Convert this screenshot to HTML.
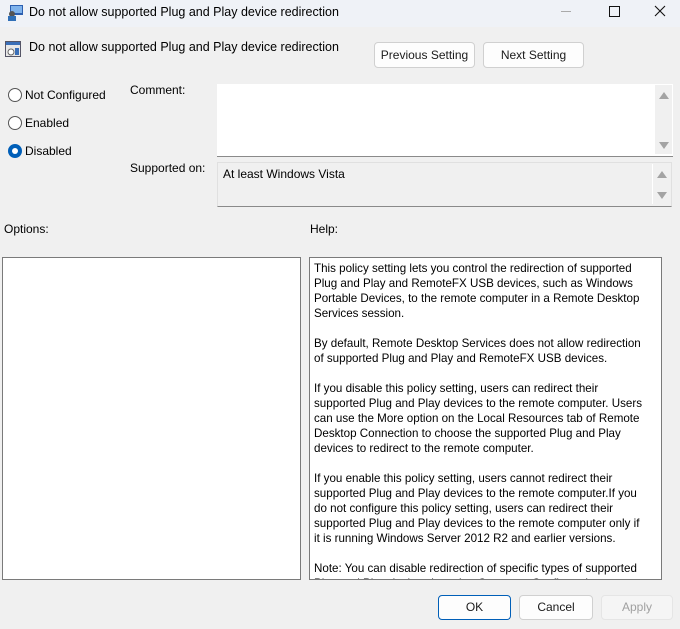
<!DOCTYPE html>
<html><head><style>
body{margin:0;width:680px;height:629px;background:#f0f0f0;font-family:"Liberation Sans",sans-serif;font-size:12px;color:#000;position:relative;overflow:hidden}
.a{position:absolute}
.title{left:0;top:0;width:680px;height:27px;background:#eff2f7}
.btn{position:absolute;background:#fdfdfd;border:1px solid #d0d0d0;border-radius:4px;box-sizing:border-box;text-align:center;font-size:12px;color:#1a1a1a}
.radio{position:absolute;width:12px;height:12px;border:1px solid #555;border-radius:50%;background:#fff}
.box{position:absolute;background:#fff;border:1px solid #7a7a7a;box-sizing:border-box}
.sb{position:absolute;right:1px;top:1px;bottom:2px;width:17px;background:#f0f0f0}
.up,.dn{position:absolute;left:4px;width:0;height:0;border-left:5px solid transparent;border-right:5px solid transparent}
.up{top:7px;border-bottom:7px solid #a3a3a3}.dn{bottom:5px;border-top:7px solid #a3a3a3}
</style></head><body>
<div class="a title"></div>
<svg class="a" style="left:6px;top:4px" width="18" height="18"><rect x="4" y="1" width="13" height="10" fill="#2c5fb0"/><rect x="5" y="2" width="11" height="7" fill="#7fb3ec"/><circle cx="6" cy="10" r="3" fill="#555"/><rect x="2" y="12" width="8" height="5" fill="#2f6fb7"/></svg>
<div class="a" style="left:29px;top:5px;font-size:12.5px">Do not allow supported Plug and Play device redirection</div>
<div class="a" style="left:561px;top:11px;width:10px;height:1px;background:#aaa"></div>
<div class="a" style="left:609px;top:6px;width:9px;height:9px;border:1px solid #111"></div>
<svg class="a" style="left:654px;top:5px" width="12" height="12"><path d="M1 1L11 11M11 1L1 11" stroke="#111" stroke-width="1.1"/></svg>
<svg class="a" style="left:5px;top:41px" width="16" height="16"><rect x="0.5" y="0.5" width="15" height="15" fill="#e8e8e8" stroke="#556"/><rect x="1" y="1" width="14" height="3" fill="#3a6fb8"/><circle cx="6" cy="11" r="3" fill="#fff" stroke="#666"/><rect x="10" y="7" width="4" height="7" fill="#3a6fb8"/></svg>
<div class="a" style="left:29px;top:40px;font-size:12.5px">Do not allow supported Plug and Play device redirection</div>
<div class="btn" style="left:374px;top:42px;width:101px;height:26px;line-height:24px">Previous Setting</div>
<div class="btn" style="left:483px;top:42px;width:101px;height:26px;line-height:24px">Next Setting</div>
<div class="radio" style="left:8px;top:88px"></div><div class="a" style="left:25px;top:88px">Not Configured</div>
<div class="radio" style="left:8px;top:116px"></div><div class="a" style="left:25px;top:116px">Enabled</div>
<div class="radio" style="left:8px;top:144px;border-color:#005fb8;background:#005fb8"></div><div class="a" style="left:12px;top:148px;width:6px;height:6px;border-radius:50%;background:#fff"></div><div class="a" style="left:25px;top:144px">Disabled</div>
<div class="a" style="left:130px;top:83px">Comment:</div>
<div class="a" style="left:130px;top:161px">Supported on:</div>
<div class="a" style="left:217px;top:84px;width:456px;height:72px;background:#fff;border-bottom:1px solid #8a8a8a"><div class="sb"><div class="up"></div><div class="dn"></div></div></div>
<div class="a" style="left:217px;top:162px;width:455px;height:45px;background:#f0f0f0;border:1px solid #e0e0e0;border-bottom:1px solid #8a8a8a;box-sizing:border-box"><div class="sb" style="background:#f0f0f0;border-left:1px solid #fff"><div class="up"></div><div class="dn"></div></div><div class="a" style="left:5px;top:4px">At least Windows Vista</div></div>
<div class="a" style="left:4px;top:222px">Options:</div>
<div class="a" style="left:310px;top:222px">Help:</div>
<div class="box" style="left:2px;top:257px;width:299px;height:323px"></div>
<div class="box" style="left:309px;top:257px;width:353px;height:323px;overflow:hidden"><div style="position:absolute;left:4px;top:3px;font-size:11.6px;line-height:15px;white-space:nowrap">This policy setting lets you control the redirection of supported<br>Plug and Play and RemoteFX USB devices, such as Windows<br>Portable Devices, to the remote computer in a Remote Desktop<br>Services session.<br><br>By default, Remote Desktop Services does not allow redirection<br>of supported Plug and Play and RemoteFX USB devices.<br><br>If you disable this policy setting, users can redirect their<br>supported Plug and Play devices to the remote computer. Users<br>can use the More option on the Local Resources tab of Remote<br>Desktop Connection to choose the supported Plug and Play<br>devices to redirect to the remote computer.<br><br>If you enable this policy setting, users cannot redirect their<br>supported Plug and Play devices to the remote computer.If you<br>do not configure this policy setting, users can redirect their<br>supported Plug and Play devices to the remote computer only if<br>it is running Windows Server 2012 R2 and earlier versions.<br><br>Note: You can disable redirection of specific types of supported<br>Plug and Play devices by using Computer Configuration</div></div>
<div class="btn" style="left:438px;top:595px;width:73px;height:25px;line-height:23px;border:1px solid #005fb8">OK</div>
<div class="btn" style="left:519px;top:595px;width:74px;height:25px;line-height:23px">Cancel</div>
<div class="btn" style="left:601px;top:595px;width:72px;height:25px;line-height:23px;background:#f5f5f5;border-color:#e5e5e5;color:#a0a0a0">Apply</div>
</body></html>
